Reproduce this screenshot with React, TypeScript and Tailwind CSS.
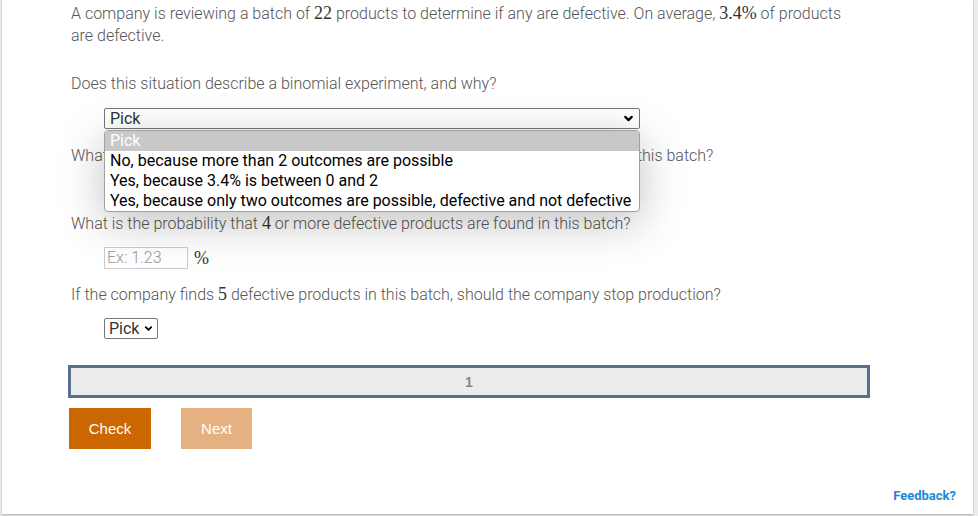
import { ChevronDown } from 'lucide-react';

function M({ children }: { children: React.ReactNode }) {
  return <span className="font-['Liberation_Serif',serif] text-[18px] leading-[0] text-[#333]">{children}</span>;
}

const options = [
  'No, because more than 2 outcomes are possible',
  'Yes, because 3.4% is between 0 and 2',
  'Yes, because only two outcomes are possible, defective and not defective',
];

export default function App() {
  return (
    <div className="h-[516px] w-[978px] overflow-hidden bg-[#ededed]">
      <div className="ml-[2px] flex h-[514px] w-[971px] flex-col bg-white shadow-[0_1px_2px_rgba(0,0,0,0.3)]">
        <div className="pl-[69px] pt-[3px] font-[Roboto,sans-serif] text-[16px] font-light leading-[22px] text-[#555]">
          <p className="w-[785px]">
            A company is reviewing a batch of <M>22</M> products to determine if any are defective. On average, <M>3.4%</M> of products are defective.
          </p>

          <p className="mt-[26px]">Does this situation describe a binomial experiment, and why?</p>

          <div className="relative z-10 ml-[33px] mt-[13px] w-[536px]">
            <div className="flex h-[21px] items-center justify-between rounded-[2px] border border-[#767676] bg-white pl-[5px] pr-[4px] font-normal text-[#333]">
              <span className="leading-[19px]">Pick</span>
              <ChevronDown size={13} strokeWidth={4} className="text-black" />
            </div>
            {/* open option list */}
            <div className="absolute left-0 top-[22px] w-[536px] overflow-hidden rounded-[4px] border border-[#a0a0a0] bg-white font-normal leading-[20px] text-black shadow-[0_10px_45px_rgba(0,0,0,0.25)]">
              <div className="bg-[#c8c8c8] pl-[5px] text-white">Pick</div>
              {options.map((o) => (
                <div key={o} className="pl-[5px]">
                  {o}
                </div>
              ))}
            </div>
          </div>

          <p className="mt-[16px]">
            What is the probability that no more than <M>3</M> of the defective products are found in this batch?
          </p>
          <div className="ml-[33px] mt-[12px] flex h-[22px] items-center gap-[6px]">
            <div className="h-[22px] w-[84px] border border-[#ccc] pl-[2px] leading-[20px] text-[#999]">Ex: 1.23</div>
            <M>%</M>
          </div>

          <p className="mt-[12px]">
            What is the probability that <M>4</M> or more defective products are found in this batch?
          </p>
          <div className="ml-[33px] mt-[12px] flex h-[22px] items-center gap-[6px]">
            <div className="h-[22px] w-[84px] border border-[#ccc] pl-[2px] leading-[20px] text-[#999]">Ex: 1.23</div>
            <M>%</M>
          </div>

          <p className="mt-[15px]">
            If the company finds <M>5</M> defective products in this batch, should the company stop production?
          </p>
          <div className="ml-[33px] mt-[12px] flex h-[21px] w-[54px] items-center justify-between rounded-[2px] border border-[#767676] pl-[4px] pr-[3px] font-normal text-[#333]">
            <span className="leading-[19px]">Pick</span>
            <ChevronDown size={11} strokeWidth={4} className="text-black" />
          </div>

          <div className="ml-[-3px] mt-[26px] flex h-[33px] w-[802px] items-center justify-center border-[3px] border-[#5a6f8f] bg-[#ececec] font-['Liberation_Sans',sans-serif] text-[14px] font-bold text-[#888]">
            1
          </div>

          <div className="ml-[-2px] mt-[10px] flex gap-[30px] font-['Liberation_Sans',sans-serif] text-[15px] font-normal text-white">
            <button className="h-[41px] w-[82px] bg-[#cc6600]">Check</button>
            <button className="h-[41px] w-[71px] bg-[#e5b180]">Next</button>
          </div>
        </div>

        <div className="mt-auto flex justify-end pb-[9px] pr-[17px]">
          <span className="font-[Roboto,sans-serif] text-[13px] font-bold text-[#1a8ad6]">Feedback?</span>
        </div>
      </div>
    </div>
  );
}
